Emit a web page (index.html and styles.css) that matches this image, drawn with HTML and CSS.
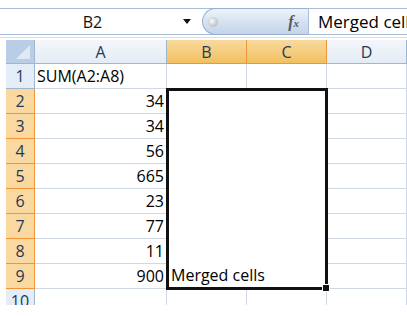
FILE: index.html
```html
<!DOCTYPE html>
<html lang="en">
<head>
  <meta charset="UTF-8" />
  <title>Merged cells</title>
  <link rel="stylesheet" href="styles.css">
</head>
<body>
  <div class="formula-bar">
    <div class="name-box">
      <span class="name">B2</span>
      <span class="arrow"></span>
    </div>
    <div class="bubble">
      <span class="dot"></span>
      <span class="fx">f<small>x</small></span>
    </div>
    <div class="formula">Merged cells</div>
  </div>
  <div class="bar-line"></div>

  <div class="sheet">
    <div class="corner"><span class="tri"></span></div>
    <div class="col-head">A</div>
    <div class="col-head sel">B</div>
    <div class="col-head sel">C</div>
    <div class="col-head">D</div>

    <div class="row-head">1</div>
    <div class="cell">SUM(A2:A8)</div>
    <div class="cell"></div>
    <div class="cell"></div>
    <div class="cell"></div>

    <div class="row-head sel">2</div><div class="cell num">34</div>
    <div class="merged">Merged cells<span class="handle"></span></div>
    <div class="cell"></div>
    <div class="row-head sel">3</div><div class="cell num">34</div><div class="cell"></div>
    <div class="row-head sel">4</div><div class="cell num">56</div><div class="cell"></div>
    <div class="row-head sel">5</div><div class="cell num">665</div><div class="cell"></div>
    <div class="row-head sel">6</div><div class="cell num">23</div><div class="cell"></div>
    <div class="row-head sel">7</div><div class="cell num">77</div><div class="cell"></div>
    <div class="row-head sel">8</div><div class="cell num">11</div><div class="cell"></div>
    <div class="row-head sel">9</div><div class="cell num">900</div><div class="cell"></div>

    <div class="row-head last">10</div>
    <div class="cell"></div>
    <div class="cell"></div>
    <div class="cell"></div>
    <div class="cell"></div>
  </div>
</body>
</html>
```

FILE: styles.css
```css
body { margin: 0; background: #fff; font-family: "Open Sans", "Liberation Sans", sans-serif; font-size: 16px; color: #000; width: 407px; overflow: hidden; }

/* formula bar */
.formula-bar { margin-top: 8px; height: 25px; display: flex; border-top: 1px solid #a7bcd6; border-bottom: 1px solid #a7bcd6; }
.name-box { width: 202px; display: flex; align-items: center; background: #fff; }
.name { flex: 1; text-align: center; padding-left: 2px; color: #111; }
.arrow { width: 0; height: 0; border-left: 4px solid transparent; border-right: 4px solid transparent; border-top: 5px solid #111; margin-right: 11px; }
.bubble { width: 106px; display: flex; align-items: center; justify-content: space-between; padding: 0 9px 0 5px; box-sizing: border-box; border-radius: 14px 0 0 14px; border: 1px solid #98b0cd; border-right: none; background: linear-gradient(#eef3fa, #d4e0ef 55%, #c4d4ea); margin: -1px 0; }
.dot { width: 10px; height: 10px; border-radius: 50%; background: radial-gradient(circle at 40% 40%, #fafafa, #9ea8b4); }
.fx { font-family: "Liberation Serif", serif; font-style: italic; font-weight: bold; font-size: 16px; color: #5a5a5a; }
.fx small { font-size: 11px; }
.formula { flex: 1; background: #fff; border-left: 1px solid #a7bcd6; padding-left: 9px; line-height: 25px; white-space: nowrap; overflow: hidden; font-size: 17px; }
.bar-line { height: 1px; margin-top: 2px; background: #d5dfec; }

/* sheet grid */
.sheet { display: grid; grid-template-columns: 29px 132px 80px 80px 1fr; grid-template-rows: 24px repeat(10, 25px); height: 265px; overflow: hidden; margin-top: 2px; padding-left: 6px; }
.corner { background: #b9cde7; border-right: 1px solid #9eb6ce; border-bottom: 1px solid #9eb6ce; position: relative; }
.tri { position: absolute; right: 4px; bottom: 4px; border-left: 14px solid transparent; border-bottom: 14px solid #dfe8f4; }
.col-head, .row-head { display: flex; align-items: center; justify-content: center; color: #1f3a5a; border-right: 1px solid #9eb6ce; border-bottom: 1px solid #9eb6ce; background: linear-gradient(#f3f6fb, #e4ebf5); }
.col-head.sel { background: linear-gradient(#f9d99f, #f1c15f); border-color: #f29536; }
.row-head { background: #e4ecf7; }
.row-head.sel { background: #f9d99f; border-color: #f29536; }
.row-head.last { align-items: flex-start; padding-top: 1px; }
.cell { border-right: 1px solid #d0d7e5; border-bottom: 1px solid #d0d7e5; padding: 0 2px; display: flex; align-items: center; white-space: nowrap; }
.num { justify-content: flex-end; }
.merged { grid-column: 3 / 5; grid-row: 3 / 11; border: 3px solid #111; margin: -1px; display: flex; align-items: flex-end; padding: 0 0 0 2px; line-height: 24px; position: relative; }
.handle { position: absolute; right: -5px; bottom: -5px; width: 6px; height: 6px; background: #111; border: 1px solid #fff; }
```
